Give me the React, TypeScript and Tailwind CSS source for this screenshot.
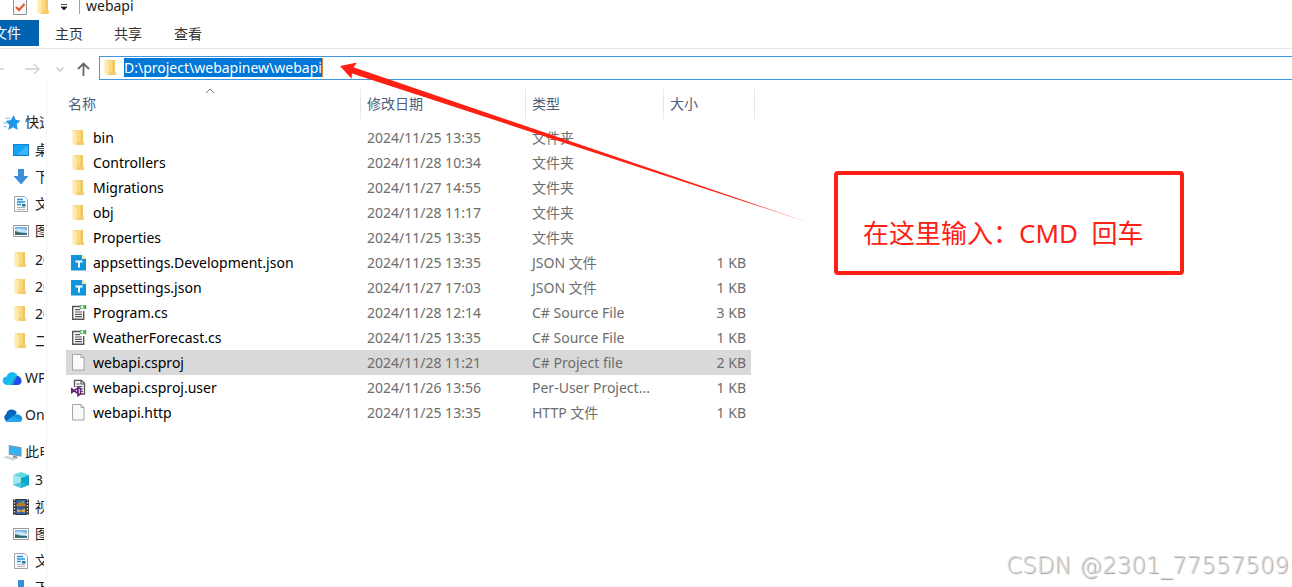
import type { ReactNode } from 'react';

type IconName =
  | 'folder'
  | 'json'
  | 'source'
  | 'blank'
  | 'user'
  | 'star'
  | 'desktop'
  | 'download'
  | 'document'
  | 'picture'
  | 'wps'
  | 'onedrive'
  | 'pc'
  | 'cube'
  | 'video';

const icons: Record<IconName, ReactNode> = {
  folder: (
    <>
      <path d="M2 0h10v10.500L13 13v2H6z" fill="#f9da83" />
      <path d="M9.500 0H12v11l-2.500 2z" fill="#efc75e" />
      <path d="M1.500 0l4 2v14l-4-2z" fill="#ffeaae" />
      <path d="M5.500 12H13v3H5.500z" fill="#f3ce6b" />
    </>
  ),
  json: (
    <>
      <path d="M0 0h11l4 4v11.500H0z" fill="#1296db" />
      <path d="M11 0l4 4h-4z" fill="#fff" />
      <path d="M11.500 0L15 3.500h-3.500z" fill="#f9d879" />
      <path d="M4.500 5.500h7v2H9v5H7v-5H4.500z" fill="#fff" />
    </>
  ),
  source: (
    <>
      <path d="M9 1.500H1.700v12.800h11V6" fill="none" stroke="#555" strokeWidth="1.400" />
      <path d="M4 4.700h5M4 7h7M4 9.300h7M4 11.600h7" stroke="#555" strokeWidth="1.200" />
      <path d="M11.500.6H9.300v3h2.200M13 0v4.200M14.500 0v4.200M12 1.300h3.500M12 3h3.500" fill="none" stroke="#3a9c4a" strokeWidth=".9" />
    </>
  ),
  blank: (
    <>
      <path d="M1.500-.5h8.500l3 3v12.500h-11.500z" fill="#fafafa" stroke="#a5a5a5" />
      <path d="M10-.5v3h3" fill="#e5e5e5" stroke="#a5a5a5" />
    </>
  ),
  user: (
    <>
      <path d="M3.500 7V.3h7l3 3V14h-4" fill="#f5f5f5" stroke="#555" strokeWidth="1.300" />
      <path d="M10 .5V4h3.500M5.500 4h3M5.500 6.500h6M8.500 9H12M10 11.500h2" fill="none" stroke="#555" strokeWidth="1.200" />
      <path d="M.8 9l6 4.500V8l-6 4.500zM7 7.500l2.500 1V14L7 15.500z" fill="#fff" stroke="#68217a" strokeWidth="1.600" />
    </>
  ),
  star: (
    <>
      <path d="M9.500 1l2 4.500 4.500.8-3.500 3.200.8 5.500-4.300-2.500L4.500 15l1-5L2 6.500l5-.8z" fill="#2196e8" />
      <path d="M2 4h4M0 8.500h4M0 12h3" stroke="#68b7ee" strokeWidth="1" />
    </>
  ),
  desktop: (
    <>
      <path d="M0 2h16v12H0z" fill="#1683d0" />
      <path d="M1 3h14v9.500H1z" fill="#13a4f5" />
      <path d="M15 3v9.500H4z" fill="#3cb7fa" />
    </>
  ),
  download: <path d="M5 0h6v7h4.500L8 15.500.5 7H5z" fill="#3a8fdd" />,
  document: (
    <>
      <path d="M1.500.5h10l3 3v12h-13z" fill="#f9fbfc" stroke="#9da6ac" />
      <path d="M4 3.500h6M4 6h8M4 8.500h4" stroke="#2294de" strokeWidth="1.400" />
      <path d="M9 8h3.500v2.500H9z" fill="#27739e" />
      <path d="M4 11.500h8M4 13.500h8" stroke="#b4b4b4" />
    </>
  ),
  picture: (
    <>
      <path d="M.5 2.500h15v11H.5z" fill="#fff" stroke="#999" />
      <path d="M2 4h12v8H2z" fill="#79b9e9" />
      <path d="M2 6.500c3-2 7-.5 12 1V10H2z" fill="#c5e3f4" />
      <path d="M2 8l5 1.500 7 .5v2H2z" fill="#386b60" />
      <path d="M5 12l9-1.500V12z" fill="#3276b4" />
    </>
  ),
  wps: (
    <>
      <path d="M3.500 14a4 4 0 0 1-.5-8A5.500 5.500 0 0 1 12.500 4l-2 10z" fill="#16b6f4" />
      <path d="M6.500 14l3-7c2-3 7-1.500 7.500 3 .2 2.500-1.500 4-4 4z" fill="#234cf0" />
      <path d="M2.500 14l7-9c1-1 2.500-1.500 4-1l-5 10z" fill="#16d6d0" opacity=".65" />
    </>
  ),
  onedrive: (
    <>
      <path d="M3 13.500a4 4 0 0 1-.5-7A5.500 5.500 0 0 1 12.500 5l-3 6z" fill="#0865bb" />
      <path d="M2 13.500l8-6c3-1.500 7 0 7.500 3 .2 2-1 3.500-3 3.500H3z" fill="#1493e4" />
      <path d="M9 9l8 4c-.5.6-1 1-2 1H3l-1-.5z" fill="#28a8ef" />
    </>
  ),
  pc: (
    <>
      <path d="M5 1l12 2v9L5 10z" fill="#8295a2" />
      <path d="M6 2.200l10 1.600v7L6 9.200z" fill="#36b1f5" />
      <path d="M9 11l4 .8v2L9 13z" fill="#8295a2" />
      <path d="M3 11l9 3-3 1.500L0 12.500z" fill="#ccd4d9" />
    </>
  ),
  cube: (
    <>
      <path d="M8 0l8 3-8 3-8-3z" fill="#63d7e3" />
      <path d="M0 3l8 3v10l-8-3z" fill="#9eeaf0" />
      <path d="M16 3L8 6v10l8-3z" fill="#09a7c6" />
      <path d="M0 13l8-3v6zM16 13l-8-3v6z" fill="#2cbbd1" opacity=".7" />
    </>
  ),
  video: (
    <>
      <path d="M0 0h16v16H0z" fill="#363636" />
      <path d="M1.500 0v16M14.500 0v16" stroke="#ddd" strokeWidth="1.400" strokeDasharray="1.500 1.500" />
      <path d="M3.500 1h9v6.500h-9zM3.500 8.500h9V15h-9z" fill="#2d67bc" />
      <path d="M3.500 5l4-2 5 2v2.500h-9z" fill="#b87a2d" />
      <path d="M4 10l4 1.500 4-2v4l-4-1-4 1z" fill="#e0a441" />
      <path d="M9 2h2v2H9z" fill="#50bd49" />
    </>
  ),
};

const Icon = ({ name, className = 'h-4 w-4' }: { name: IconName; className?: string }) => (
  <svg viewBox="0 0 16 16" className={`shrink-0 overflow-visible ${className}`} aria-hidden="true">
    {icons[name]}
  </svg>
);

const files: { name: string; date: string; type: string; size?: string; icon: IconName; selected?: boolean }[] = [
  { name: 'bin', date: '2024/11/25 13:35', type: '文件夹', icon: 'folder' },
  { name: 'Controllers', date: '2024/11/28 10:34', type: '文件夹', icon: 'folder' },
  { name: 'Migrations', date: '2024/11/27 14:55', type: '文件夹', icon: 'folder' },
  { name: 'obj', date: '2024/11/28 11:17', type: '文件夹', icon: 'folder' },
  { name: 'Properties', date: '2024/11/25 13:35', type: '文件夹', icon: 'folder' },
  { name: 'appsettings.Development.json', date: '2024/11/25 13:35', type: 'JSON 文件', size: '1 KB', icon: 'json' },
  { name: 'appsettings.json', date: '2024/11/27 17:03', type: 'JSON 文件', size: '1 KB', icon: 'json' },
  { name: 'Program.cs', date: '2024/11/28 12:14', type: 'C# Source File', size: '3 KB', icon: 'source' },
  { name: 'WeatherForecast.cs', date: '2024/11/25 13:35', type: 'C# Source File', size: '1 KB', icon: 'source' },
  { name: 'webapi.csproj', date: '2024/11/28 11:21', type: 'C# Project file', size: '2 KB', icon: 'blank', selected: true },
  { name: 'webapi.csproj.user', date: '2024/11/26 13:56', type: 'Per-User Project...', size: '1 KB', icon: 'user' },
  { name: 'webapi.http', date: '2024/11/25 13:35', type: 'HTTP 文件', size: '1 KB', icon: 'blank' },
];

const SideHeading = ({ icon, label }: { icon: IconName; label: string }) => (
  <a href="#" className="flex h-7 items-center gap-1 pl-1">
    <Icon name={icon} className="-ml-px h-[17px] w-[18px]" />
    {label}
  </a>
);

const SideItems = ({ items }: { items: [IconName, string][] }) => (
  <ul>
    {items.map(([icon, label], i) => (
      <li key={i}>
        <a href="#" className="flex h-[27px] items-center gap-1.5 pl-[13px]">
          <Icon name={icon} />
          {label}
        </a>
      </li>
    ))}
  </ul>
);

const Sidebar = () => (
  <nav className="w-[47px] shrink-0 border-r border-gray-100 pr-0.5 text-sm whitespace-nowrap">
    <div className="h-full overflow-hidden pt-7">
      <SideHeading icon="star" label="快速" />
      <SideItems
        items={[
          ['desktop', '桌'],
          ['download', '下'],
          ['document', '文'],
          ['picture', '图'],
        ]}
      />
      <div className="mt-0.5">
        <SideItems
          items={[
            ['folder', '20'],
            ['folder', '20'],
            ['folder', '20'],
            ['folder', '二'],
          ]}
        />
      </div>
      <div className="mt-2.5 flex flex-col gap-[9px]">
        <SideHeading icon="wps" label="WPS" />
        <SideHeading icon="onedrive" label="OneDrive" />
        <SideHeading icon="pc" label="此电脑" />
      </div>
      <SideItems
        items={[
          ['cube', '3D'],
          ['video', '视'],
          ['picture', '图'],
          ['document', '文'],
          ['download', '下'],
        ]}
      />
    </div>
  </nav>
);

const FileTable = () => (
  <table className="ml-[19px] w-[689px] table-fixed border-collapse text-left text-sm whitespace-nowrap text-[#6d6d6d]">
    <colgroup>
      <col />
      <col className="w-[165px]" />
      <col className="w-[138px]" />
      <col className="w-[87px]" />
      <col className="w-1" />
    </colgroup>
    <thead>
      <tr className="h-[45px] align-bottom text-[#4c607a] *:p-0 *:pb-1.5 *:font-normal">
        <th className="relative">
          <svg viewBox="0 0 10 6" className="absolute top-2 left-[139px] h-1.5 w-2.5" aria-hidden="true">
            <path d="M1 5l4-4 4 4" fill="none" stroke="#777" />
          </svg>
          <div className="h-[30px] border-r border-gray-200 pl-0.5 leading-[30px]">名称</div>
        </th>
        <th>
          <div className="h-[30px] border-r border-gray-200 pl-1.5 leading-[30px]">修改日期</div>
        </th>
        <th>
          <div className="h-[30px] border-r border-gray-200 pl-1.5 leading-[30px]">类型</div>
        </th>
        <th>
          <div className="h-[30px] pl-1.5 leading-[30px]">大小</div>
        </th>
        <th>
          <div className="h-[30px] border-r border-gray-200" />
        </th>
      </tr>
    </thead>
    <tbody>
      {files.map((file) => (
        <tr key={file.name} className={file.selected ? 'h-[25px] *:p-0 *:not-last:bg-[#d9d9d9]' : 'h-[25px] *:p-0'}>
          <td>
            <div className="flex items-center gap-1.5 pl-[5px] text-black">
              <Icon name={file.icon} />
              {file.name}
            </div>
          </td>
          <td>
            <div className="pl-1.5">{file.date}</div>
          </td>
          <td>
            <div className="pl-1.5">{file.type}</div>
          </td>
          <td>
            <div className="pr-[5px] text-right">{file.size}</div>
          </td>
          <td />
        </tr>
      ))}
    </tbody>
  </table>
);

const Annotation = () => (
  <>
    <svg viewBox="0 0 480 170" className="absolute top-[60px] left-[338px] h-[170px] w-[480px]" aria-hidden="true">
      <defs>
        <linearGradient id="fade" x1="0" x2="1" y1="0" y2="0">
          <stop offset=".85" stopColor="#ff2015" />
          <stop offset="1" stopColor="#ff2015" stopOpacity=".3" />
        </linearGradient>
      </defs>
      <path d="M2 6l17-3.500-3.500 4.800L478 165 14 13.500l-.5 5.200z" fill="url(#fade)" />
    </svg>
    <div className="absolute top-[171px] left-[834px] flex h-[104px] w-[350px] items-center rounded border-4 border-[#ff2015] pt-5 pl-[25px] text-[26px] whitespace-pre text-[#ff2015]">
      在这里输入：CMD{'  '}回车
    </div>
  </>
);

export default function App() {
  return (
    <div className="relative flex h-screen flex-col overflow-hidden bg-white font-['Noto_Sans','Noto_Sans_CJK_SC',sans-serif] text-[#1b1b1b]">
      <header>
        <div className="mb-1.5 flex h-3.5 items-center pl-3">
          <svg viewBox="0 0 16 16" className="h-4 w-4" aria-hidden="true">
            <path d="M1.500.5h13v15h-13z" fill="#f7f8fa" stroke="#8f949c" />
            <path d="M4 8l3 3 5.500-6" fill="none" stroke="#e8541c" strokeWidth="2" />
          </svg>
          <span className="ml-2">
            <Icon name="folder" />
          </span>
          <svg viewBox="0 0 8 6" className="ml-2 h-1.5 w-2" aria-hidden="true">
            <path d="M1 .5h6M1 3h6L4 6z" stroke="#222" strokeWidth=".8" fill="#222" />
          </svg>
          <span className="ml-[11px] h-3.5 border-l border-gray-400" />
          <h1 className="ml-1.5 h-4 text-sm leading-3.5">webapi</h1>
        </div>
        <div className="flex h-[29px] items-start border-b border-gray-200 text-sm text-[#333]">
          <button className="flex h-[26px] w-[39px] items-center justify-end bg-[#0063b1] pr-[18px] whitespace-nowrap text-white">
            文件
          </button>
          <button className="ml-4 h-7">主页</button>
          <button className="ml-[31px] h-7">共享</button>
          <button className="ml-8 h-7">查看</button>
        </div>
      </header>

      <div className="flex h-[31px] items-end">
        <svg viewBox="0 0 99 24" className="h-6 w-[99px] shrink-0" fill="none" aria-hidden="true">
          <path d="M0 13h4M25 13h14M34 8l5 5-5 5" stroke="#d0d0d0" strokeWidth="1.400" />
          <path d="M56.500 11.500l3.500 3.500 3.500-3.500" stroke="#c4c4c4" strokeWidth="1.400" />
          <path d="M83.500 20V8M78 13l5.500-5.500L89 13" stroke="#666" strokeWidth="1.800" />
        </svg>
        <label className="flex h-6 flex-1 items-center border border-r-0 border-[#3f98dd] pl-[3px]">
          <Icon name="folder" />
          <input
            aria-label="地址"
            defaultValue="D:\project\webapinew\webapi"
            className="mb-px ml-[5px] field-sizing-content h-[19px] border-r border-[#d08040] bg-[#0078d7] text-sm text-white outline-none"
          />
        </label>
      </div>

      <div className="flex min-h-0 flex-1">
        <Sidebar />
        <main className="min-w-0 flex-1">
          <FileTable />
        </main>
      </div>

      <Annotation />
      <p className="absolute right-[3px] bottom-2 font-['DejaVu_Sans',sans-serif] text-[23px] leading-7 font-extralight text-[#d8d8d8] text-shadow-[1px_1px_1px_#999]">
        CSDN @2301_77557509
      </p>
    </div>
  );
}
